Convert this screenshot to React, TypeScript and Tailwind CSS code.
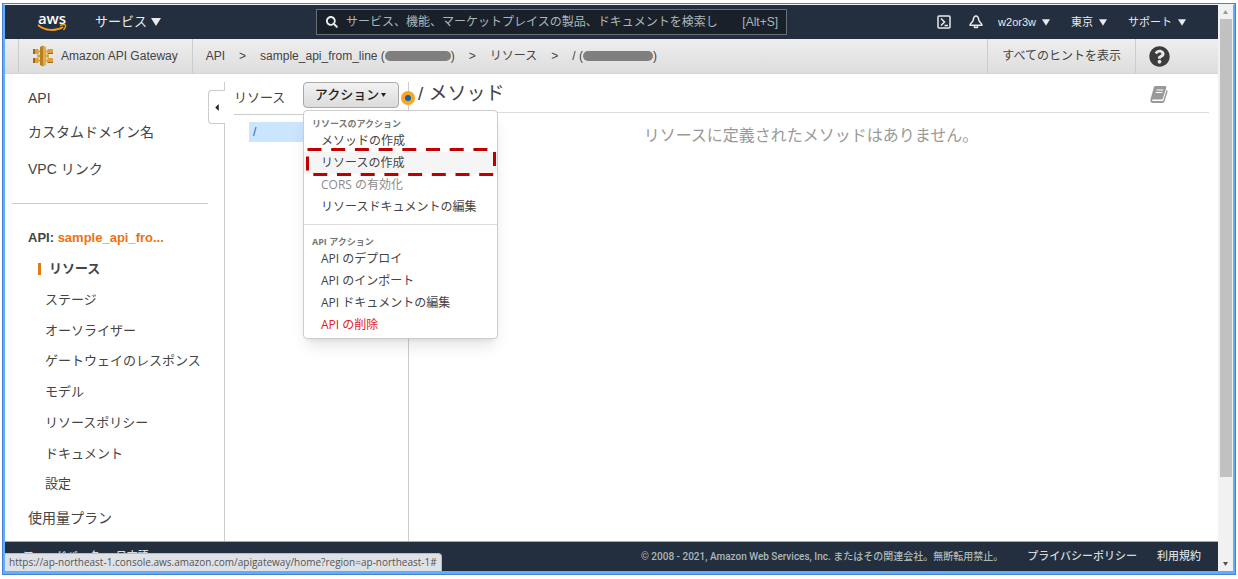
import { FaQuestionCircle, FaSearch } from 'react-icons/fa';

const apiMenu = [
  'ステージ',
  'オーソライザー',
  'ゲートウェイのレスポンス',
  'モデル',
  'リソースポリシー',
  'ドキュメント',
  '設定',
];

const resourceActions = [
  { label: 'メソッドの作成', className: '' },
  { label: 'リソースの作成', className: 'bg-[#f5f5f5]' },
  { label: 'CORS の有効化', className: 'text-[#8c8c8c]' },
  { label: 'リソースドキュメントの編集', className: '' },
];

const apiActions = [
  { label: 'API のデプロイ', className: '' },
  { label: 'API のインポート', className: '' },
  { label: 'API ドキュメントの編集', className: '' },
  { label: 'API の削除', className: 'text-[#e0201b]' },
];

function Caret({ className }: { className: string }) {
  return (
    <svg viewBox="0 0 10 8" className={className} fill="currentColor">
      <path d="M0 0h10L5 8z" />
    </svg>
  );
}

function AwsLogo() {
  return (
    <a href="#" className="flex flex-col items-center text-white">
      <span className="font-['Open_Sans'] text-[15px] leading-3 font-semibold">
        aws
      </span>
      <svg viewBox="0 0 30 9" className="-mt-px h-[9px] w-[30px]">
        <path
          d="M1 2C8 8 19 8.500 26 4"
          fill="none"
          stroke="#f79a1c"
          strokeWidth="1.800"
        />
        <path
          d="M23 2.500C25.500 1.500 28 1.500 28.500 2.200S28 5.500 26.500 7"
          fill="none"
          stroke="#f79a1c"
          strokeWidth="1.400"
        />
      </svg>
    </a>
  );
}

function GatewayIcon() {
  return (
    <svg viewBox="0 0 20 22" className="h-[22px] w-5">
      <path
        fill="#d9a13b"
        d="M4 9.500h12v3H4zM0 4h5.500v5H0zM14.500 4H20v5h-5.500zM0 13h5.500v5H0zM14.500 13H20v5h-5.500zM5 5.500h10v2H5zM5 14.500h10v2H5z"
      />
      <path
        fill="#9d6a1c"
        d="M0 4h2v5H0zM0 13h2v5H0zM14.500 8H20v1h-5.500zM14.500 17H20v1h-5.500z"
      />
      <path fill="#b8801f" d="M7 2 10 .5v21L7 20z" />
      <path fill="#e0aa45" d="M10 .5 13 2v18l-3 1.500z" />
    </svg>
  );
}

function BookIcon() {
  return (
    <svg viewBox="0 0 18 17" className="h-[17px] w-[18px]">
      <path
        fill="#999"
        d="M5.500 0H15c1 0 1.500.7 1.200 1.700L13 12.200c-.3.900-1 1.300-1.900 1.300H2.800c-.8 0-1 .4-.8.8.2.500.7.700 1.400.7h8.600c.8 0 1.400-.4 1.600-1.200L16.500 4c.8.3 1.300.9 1 1.800l-2.900 9.500c-.3 1-1.100 1.700-2.200 1.700H3C1 17 .1 15.600.4 13.800L3.700 1.700C4 .6 4.600 0 5.500 0z"
      />
      <path
        d="M6.500 4h6.700M5.700 6.500h6.700"
        fill="none"
        stroke="#fff"
        strokeWidth="1"
      />
    </svg>
  );
}

function ActionList({
  title,
  items,
}: {
  title: string;
  items: { label: string; className: string }[];
}) {
  return (
    <div>
      <div className="px-2 text-[9px] leading-3 font-bold text-[#777]">
        {title}
      </div>
      {items.map((item) => (
        <button
          key={item.label}
          className={`block h-[22px] w-full px-[17px] text-left text-xs ${item.className}`}
        >
          {item.label}
        </button>
      ))}
    </div>
  );
}

function TopNav() {
  return (
    <nav className="flex h-[34px] items-center bg-[#232f3e] pr-8 pl-8 text-[#e8eaec]">
      <AwsLogo />
      <button className="ml-7 flex items-center gap-1 text-[13px]">
        サービス
        <Caret className="h-2 w-[10px]" />
      </button>
      <label className="ml-[155px] flex h-[26px] w-[471px] items-center border border-[#687078] bg-[#1a2029] pr-2 pl-[9px]">
        <FaSearch className="size-3" />
        <input
          type="text"
          aria-label="検索"
          placeholder="サービス、機能、マーケットプレイスの製品、ドキュメントを検索し"
          className="ml-2 min-w-0 flex-1 text-xs outline-none placeholder:text-[#aab7b8]"
        />
        <span className="text-xs text-[#aab7b8]">[Alt+S]</span>
      </label>
      <div className="ml-auto flex items-center text-[11px]">
        <button aria-label="CloudShell">
          <svg
            viewBox="0 0 14 14"
            className="size-[14px]"
            fill="none"
            stroke="currentColor"
            strokeWidth="1.500"
          >
            <rect x="1" y="1" width="12" height="12" rx="1" />
            <path d="M4 3.500 7.500 7 4 10.500M7.500 10.500H11" />
          </svg>
        </button>
        <button aria-label="通知" className="ml-[18px]">
          <svg
            viewBox="0 0 14 14"
            className="size-[14px]"
            fill="none"
            stroke="currentColor"
            strokeWidth="1.500"
            strokeLinejoin="round"
          >
            <path d="M7 1C4.800 1 4.400 3.500 4.200 5.200 4 7 1 8.300 1 10.300h12C13 8.300 10 7 9.800 5.200 9.600 3.500 9.200 1 7 1zM5.500 10.500v2h3v-2" />
          </svg>
        </button>
        <button className="ml-[15px] flex items-center gap-[6px]">
          w2or3w
          <Caret className="h-[7px] w-2" />
        </button>
        <button className="ml-[21px] flex items-center gap-[6px]">
          東京
          <Caret className="h-[7px] w-2" />
        </button>
        <button className="ml-[21px] flex items-center gap-[6px]">
          サポート
          <Caret className="h-[7px] w-2" />
        </button>
      </div>
    </nav>
  );
}

function Breadcrumbs() {
  return (
    <div className="flex h-[35px] items-stretch border-b border-[#d5d5d5] bg-linear-to-b from-[#eeeeee] to-[#dddddd] pl-[13px] text-xs text-[#444]">
      <a
        href="#"
        className="flex items-center gap-2 border-x border-[#ccc] pr-[14px] pl-[14px]"
      >
        <GatewayIcon />
        Amazon API Gateway
      </a>
      <div className="flex items-center gap-[14px] pl-[13px]">
        <a href="#">API</a>
        <span>&gt;</span>
        <a href="#" className="flex items-center">
          sample_api_from_line (
          <span className="h-[10px] w-[66px] rounded-full bg-[#7f7f7f]" />)
        </a>
        <span>&gt;</span>
        <a href="#">リソース</a>
        <span>&gt;</span>
        <a href="#" className="flex items-center">
          / (<span className="h-[10px] w-[70px] rounded-full bg-[#7f7f7f]" />)
        </a>
      </div>
      <button className="ml-auto border-x border-[#ccc] px-[14px]">
        すべてのヒントを表示
      </button>
      <button aria-label="ヘルプ" className="pr-12 pl-[13px]">
        <FaQuestionCircle className="size-[21px] text-[#3c3c3c]" />
      </button>
    </div>
  );
}

function Sidebar() {
  return (
    <aside className="flex w-[220px] shrink-0 pt-2">
      <div className="flex-1 text-sm text-[#444]">
        <div className="flex flex-col pl-[23px]">
          <a href="#" className="h-8 leading-8">
            API
          </a>
          <a href="#" className="h-[37px] leading-[37px]">
            カスタムドメイン名
          </a>
          <a href="#" className="h-[37px] leading-[37px]">
            VPC リンク
          </a>
        </div>
        <hr className="mt-[15px] ml-[7px] border-[#ccc]" />
        <div className="mt-[24px] ml-[23px] text-[13px] leading-5 font-bold">
          API:{' '}
          <a href="#" className="text-[#ec7211]">
            sample_api_fro...
          </a>
        </div>
        <ul className="mt-[6px] grid h-[246px] auto-rows-fr text-[13px] whitespace-nowrap">
          <li className="flex items-center pl-[33px] font-bold">
            <span className="mr-2 h-3 w-[3px] bg-[#e07b11]" />
            <a href="#">リソース</a>
          </li>
          {apiMenu.map((item) => (
            <li key={item} className="flex items-center pl-10">
              <a href="#">{item}</a>
            </li>
          ))}
        </ul>
        <a href="#" className="ml-[23px] block h-9 leading-9">
          使用量プラン
        </a>
      </div>
      {/* collapse tab breaks the divider line */}
      <div className="flex w-[17px] flex-col">
        <div className="h-2 border-r border-[#ccc]" />
        <button
          aria-label="閉じる"
          className="flex h-[34px] items-center justify-center rounded-l border border-r-0 border-[#ccc]"
        >
          <svg viewBox="0 0 4 8" className="h-[7px] w-1" fill="#222">
            <path d="M4 0v8L0 4z" />
          </svg>
        </button>
        <div className="flex-1 border-r border-[#ccc]" />
      </div>
    </aside>
  );
}

function ActionMenu() {
  return (
    <div className="absolute top-full left-0 z-10 mt-[2px] w-[195px] rounded-sm border border-[#ccc] bg-white pt-[7px] pb-[2px] font-['Open_Sans','Noto_Sans_CJK_JP',sans-serif] text-[#444] shadow-lg">
      <ActionList title="リソースのアクション" items={resourceActions} />
      <hr className="mt-[6px] mb-[11px] border-[#ddd]" />
      <ActionList title="API アクション" items={apiActions} />
      <svg
        viewBox="0 0 192 28"
        className="pointer-events-none absolute top-[37px] left-[1px] h-7 w-48"
      >
        <rect
          x="2.500"
          y="1.500"
          width="187"
          height="25"
          fill="none"
          stroke="#c00000"
          strokeWidth="3"
          strokeDasharray="14 9.700"
        />
      </svg>
    </div>
  );
}

function Resources() {
  return (
    <section className="w-[184px] shrink-0 pt-2 pl-[9px]">
      <div className="relative h-full border-r border-[#ccc]">
        <div className="flex h-[33px] items-center justify-between border-b border-[#ccc] pr-[9px] text-[13px] text-[#444]">
          <h2>リソース</h2>
          <div className="relative -mt-[7px]">
            <button className="flex h-[26px] w-24 items-center justify-center gap-px rounded-sm border border-[#aaa] bg-linear-to-b from-[#f2f2f2] to-[#dcdcdc] font-medium text-[#222]">
              アクション
              <Caret className="h-1 w-[7px]" />
            </button>
            <ActionMenu />
          </div>
        </div>
        <a
          href="#"
          className="mt-[7px] ml-[15px] block h-5 bg-[#cce5ff] pl-1 text-xs leading-5 text-[#1166bb]"
        >
          /
        </a>
        <span className="absolute top-[9px] -right-[7px] flex size-[14px] items-center justify-center rounded-full bg-[#fba524]">
          <span className="size-[6px] rounded-full bg-[#1763a8]" />
        </span>
      </div>
    </section>
  );
}

function Methods() {
  return (
    <section className="flex-1 pr-[9px]">
      <div className="flex h-[39px] items-center justify-between border-b border-[#ddd] pt-[2px] pr-[41px] pl-[9px]">
        <h1 className="text-[19px] text-[#444]">/ メソッド</h1>
        <BookIcon />
      </div>
      <p className="mt-[11px] pl-1 text-center text-base text-[#999]">
        リソースに定義されたメソッドはありません。
      </p>
    </section>
  );
}

function Footer() {
  return (
    <footer className="relative flex h-[30px] items-center border-t border-[#aaa] bg-[#232f3e] pr-[17px] pl-[18px] text-[11px] font-medium text-[#d5dbdb]">
      <a href="#">フィードバック</a>
      <a href="#" className="ml-4">
        日本語
      </a>
      <span className="ml-auto font-['Roboto','Noto_Sans_CJK_JP',sans-serif] text-[10px] text-[#aab7b8]">
        © 2008 - 2021, Amazon Web Services, Inc.
        またはその関連会社。無断転用禁止。
      </span>
      <a href="#" className="ml-6">
        プライバシーポリシー
      </a>
      <a href="#" className="ml-5">
        利用規約
      </a>
      <div className="absolute bottom-0 left-0 h-[18px] rounded-tr border-t border-r border-[#bbb] bg-[#dee1e6] px-1 font-['Open_Sans'] text-[10px] leading-[17px] font-normal text-[#555]">
        https://ap-northeast-1.console.aws.amazon.com/apigateway/home?region=ap-northeast-1#
      </div>
    </footer>
  );
}

function Scrollbar() {
  return (
    <div className="flex w-[15px] flex-col items-center bg-[#f1f1f1] text-[#505050]">
      <div className="flex h-[14px] items-center">
        <Caret className="h-1 w-[7px] rotate-180 text-[#999]" />
      </div>
      <div className="h-[458px] w-3 bg-[#c1c1c1]" />
      <div className="mt-auto flex h-[14px] items-center">
        <Caret className="h-1 w-[7px]" />
      </div>
    </div>
  );
}

export default function App() {
  return (
    <div className="flex h-screen bg-white pt-[3px] pr-[2px] pb-1 pl-[2px] font-['Liberation_Sans','Noto_Sans_CJK_JP',sans-serif]">
      <div className="flex min-w-0 flex-1 border border-[#4a80cc] bg-white">
        <div className="flex min-w-0 flex-1 border-x-2 border-t border-b-[3px] border-[#5fadff] border-t-[#eef4fc]">
          <div className="flex min-w-0 flex-1 flex-col">
            <TopNav />
            <Breadcrumbs />
            <main className="flex flex-1">
              <Sidebar />
              <Resources />
              <Methods />
            </main>
            <Footer />
          </div>
          <Scrollbar />
        </div>
      </div>
    </div>
  );
}
